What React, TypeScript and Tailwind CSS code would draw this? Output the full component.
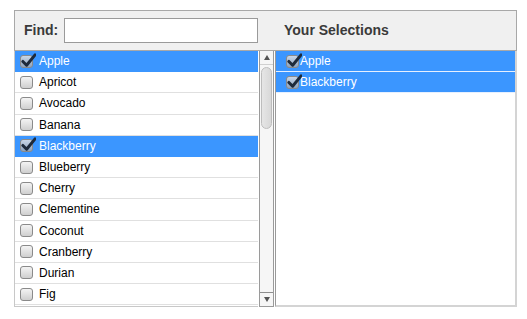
import React from 'react'

const fruits = [
  'Apple',
  'Apricot',
  'Avocado',
  'Banana',
  'Blackberry',
  'Blueberry',
  'Cherry',
  'Clementine',
  'Coconut',
  'Cranberry',
  'Durian',
  'Fig',
]

const selected = ['Apple', 'Blackberry']

function Box({ checked }: { checked: boolean }) {
  return (
    <span
      className={`relative inline-block w-[13px] h-[13px] shrink-0 rounded-[3px] border border-[#8a8a8a] bg-gradient-to-b ${
        checked ? 'from-[#c9d6e6] to-[#8fa3bc]' : 'from-[#f4f4f4] to-[#cfcfcf]'
      }`}
    >
      {checked && (
        <svg viewBox="0 0 16 16" className="absolute left-[0px] top-[-3px] w-[15px] h-[15px]">
          <path d="M2 9 L6 13 L15 2" fill="none" stroke="#1e2a3a" strokeWidth="3.2" strokeLinecap="round" strokeLinejoin="round" />
        </svg>
      )}
    </span>
  )
}

export default function App() {
  return (
    <div className="w-[527px] h-[319px] bg-white pt-[10px] pl-[14px] font-['Liberation_Sans',Arial,sans-serif]">
      <div className="w-[503px]">
        <div className="h-[41px] flex items-center bg-[#f0f0f0] border border-[#a8a8a8]">
          <div className="w-[259px] flex items-center pl-[9px]">
            <span className="text-[14px] font-bold text-[#3a3a3a]">Find:</span>
            <input className="ml-[6px] w-[194px] h-[25px] border border-[#9a9a9a] bg-white outline-none" />
          </div>
          <span className="ml-[10px] text-[14px] font-bold text-[#3a3a3a]">Your Selections</span>
        </div>
        <div className="flex h-[256px]">
          <div className="w-[244px] border-l border-b border-[#c8c8c8]">
            {fruits.map((f) => {
              const on = selected.includes(f)
              return (
                <div
                  key={f}
                  className={`h-[21.2px] flex items-center gap-[6px] pl-[5px] border-b text-[12px] ${
                    on ? 'bg-[#3b96ff] text-white border-[#3b96ff]' : 'text-black border-[#e0e0e0]'
                  }`}
                >
                  <Box checked={on} />
                  <span>{f}</span>
                </div>
              )
            })}
          </div>
          <div className="w-[15px] ml-[1px] flex flex-col border border-t-0 border-[#9a9a9a] bg-[#f6f6f6]">
            <div className="h-[14px] flex items-center justify-center border-b border-[#d0d0d0]">
              <span className="w-0 h-0 border-l-[3px] border-r-[3px] border-b-[5px] border-l-transparent border-r-transparent border-b-[#555]" />
            </div>
            <div className="flex-1 px-[1px] pt-[2px]">
              <div className="h-[62px] rounded-[6px] border border-[#bdbdbd] bg-gradient-to-r from-[#e6e6e6] to-[#d8d8d8]" />
            </div>
            <div className="h-[14px] flex items-center justify-center border-t border-[#8e8e8e]">
              <span className="w-0 h-0 border-l-[3px] border-r-[3px] border-t-[5px] border-l-transparent border-r-transparent border-t-[#555]" />
            </div>
          </div>
          <div className="flex-1 ml-[1px] border-r-2 border-b-2 border-l border-[#d4d4d4] border-l-[#9a9a9a]">
            {selected.map((f) => (
              <div
                key={f}
                className="h-[21.2px] flex items-center gap-[1px] pl-[10px] bg-[#3b96ff] text-white text-[12px] border-b border-[#e6f0ff]"
              >
                <Box checked />
                <span>{f}</span>
              </div>
            ))}
          </div>
        </div>
      </div>
    </div>
  )
}
